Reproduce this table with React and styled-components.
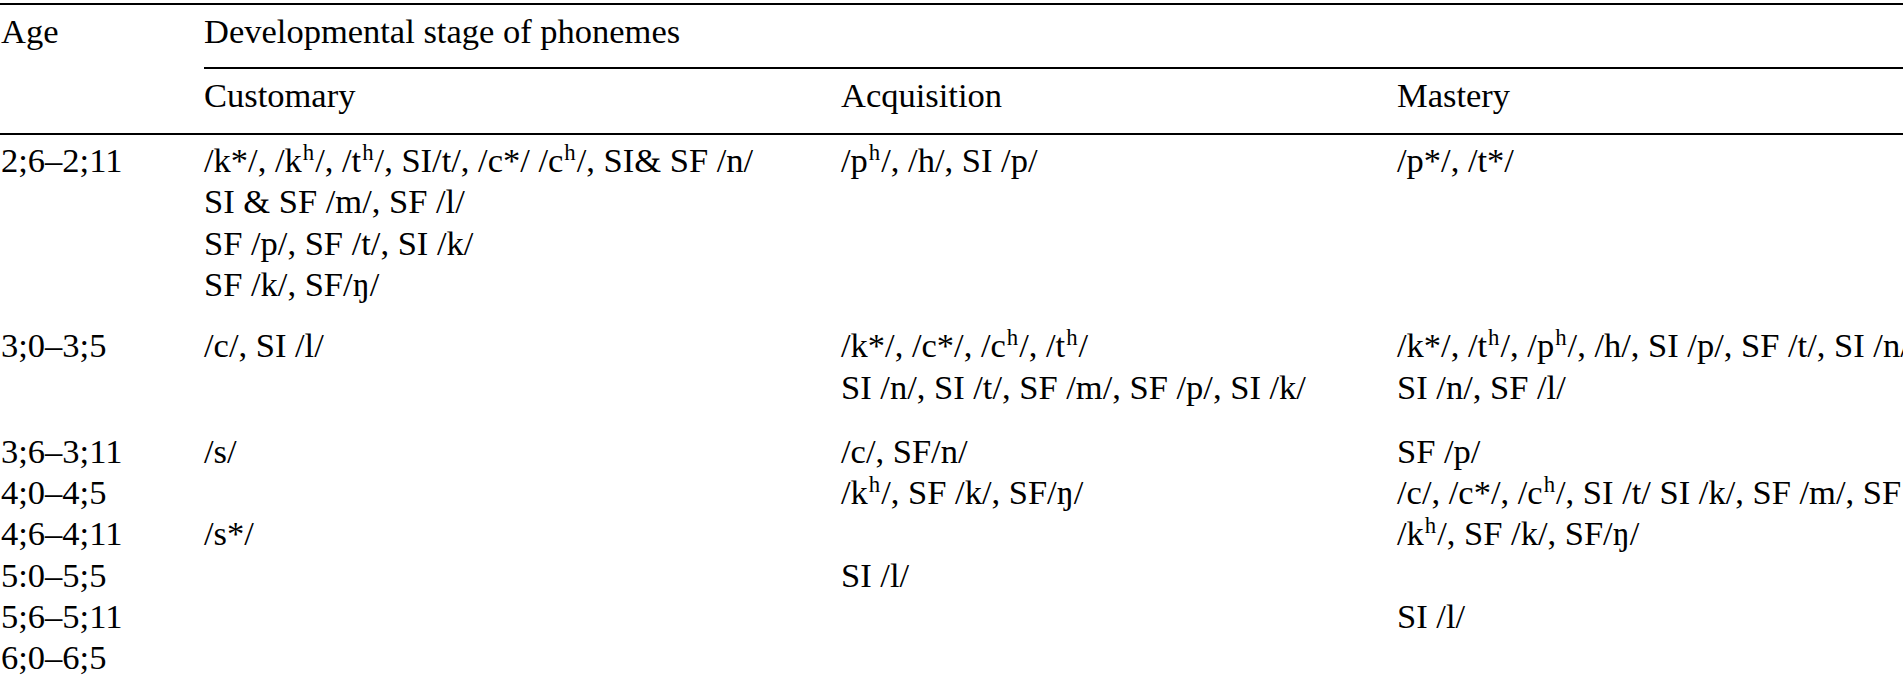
import styled, { createGlobalStyle } from "styled-components";

const GlobalStyle = createGlobalStyle`
  html, body {
    margin: 0;
    padding: 0;
    background: #fff;
    overflow: hidden;
  }
`;

const Table = styled.div`
  width: 1903px;
  margin-top: 3px;
  overflow: hidden;
  border-top: 2px solid #000;
  font-family: "Liberation Serif", "Times New Roman", serif;
  font-size: 34.5px;
  line-height: 41.3px;
  color: #000;
  white-space: nowrap;
`;

const Grid = styled.div`
  display: grid;
  grid-template-columns: 204px 637px 556px 1fr;
  padding-top: ${(p) => p.$top || 0}px;
`;

const Head = styled(Grid)`
  border-bottom: 2px solid #000;
`;

const AgeHead = styled.div`
  grid-row: 1 / span 2;
  padding-top: 6px;
  padding-left: 1px;
`;

const StageHead = styled.div`
  grid-column: 2 / span 3;
  padding: 6px 0 15px;
  border-bottom: 2px solid #000;
`;

const SubHead = styled.div`
  padding: 6px 0 16px;
`;

const Cell = styled.div`
  min-width: 0;
  padding-left: ${(p) => (p.$age ? 1 : 0)}px;
`;

const Line = styled.div`
  min-height: 41.3px;
`;

const Sup = styled.sup`
  font-size: 0.66em;
  line-height: 0;
  vertical-align: 12px;
  padding: 0 1px;
`;

function withSup(text) {
  let parts = text.split("ʰ");
  return parts.map((part, i) => (
    <span key={i}>
      {part}
      {i < parts.length - 1 ? <Sup>h</Sup> : null}
    </span>
  ));
}

const rows = [
  {
    top: 5.5,
    age: ["2;6–2;11"],
    customary: [
      "/k*/, /kʰ/, /tʰ/, SI/t/, /c*/ /cʰ/, SI& SF /n/",
      "SI & SF /m/, SF /l/",
      "SF /p/, SF /t/, SI /k/",
      "SF /k/, SF/ŋ/",
    ],
    acquisition: ["/pʰ/, /h/, SI /p/"],
    mastery: ["/p*/, /t*/"],
  },
  {
    top: 20,
    age: ["3;0–3;5"],
    customary: ["/c/, SI /l/"],
    acquisition: ["/k*/, /c*/, /cʰ/, /tʰ/", "SI /n/, SI /t/, SF /m/, SF /p/, SI /k/"],
    mastery: ["/k*/, /tʰ/, /pʰ/, /h/, SI /p/, SF /t/, SI /n/", "SI /n/, SF /l/"],
  },
  {
    top: 23,
    age: ["3;6–3;11", "4;0–4;5", "4;6–4;11", "5:0–5;5", "5;6–5;11", "6;0–6;5"],
    customary: ["/s/", "", "/s*/"],
    acquisition: ["/c/, SF/n/", "/kʰ/, SF /k/, SF/ŋ/", "", "SI /l/"],
    mastery: [
      "SF /p/",
      "/c/, /c*/, /cʰ/, SI /t/ SI /k/, SF /m/, SF /t/",
      "/kʰ/, SF /k/, SF/ŋ/",
      "",
      "SI /l/",
    ],
  },
];

function Lines({ items, age }) {
  return (
    <Cell $age={age}>
      {items.map((text, i) => (
        <Line key={i}>{withSup(text)}</Line>
      ))}
    </Cell>
  );
}

export default function App() {
  return (
    <>
      <GlobalStyle />
      <Table>
        <Head>
          <AgeHead>Age</AgeHead>
          <StageHead>Developmental stage of phonemes</StageHead>
          <SubHead>Customary</SubHead>
          <SubHead>Acquisition</SubHead>
          <SubHead>Mastery</SubHead>
        </Head>
        {rows.map((row, i) => (
          <Grid key={i} $top={row.top}>
            <Lines items={row.age} age />
            <Lines items={row.customary} />
            <Lines items={row.acquisition} />
            <Lines items={row.mastery} />
          </Grid>
        ))}
      </Table>
    </>
  );
}
